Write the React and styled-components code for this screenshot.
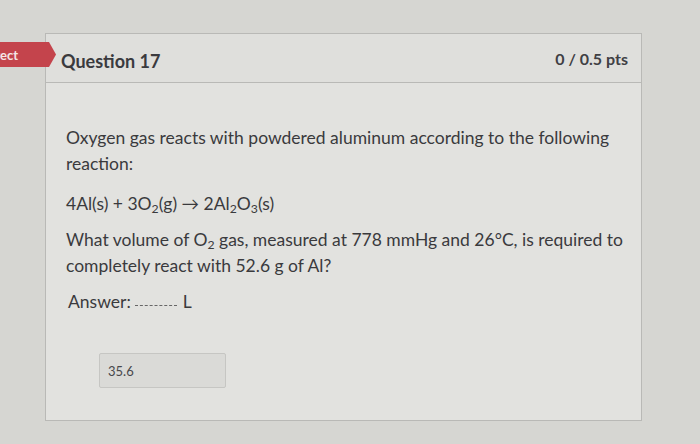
import React from "react";
import styled, { createGlobalStyle } from "styled-components";

const Global = createGlobalStyle`
  html, body { margin: 0; padding: 0; }
  body {
    background: #d6d6d2;
    font-family: Lato, "Noto Sans", sans-serif;
    color: #38383b;
    width: 700px;
    height: 444px;
    overflow: hidden;
  }
`;

const Page = styled.div`
  position: relative;
  width: 700px;
  height: 444px;
  padding: 33px 0 0 45px;
  box-sizing: border-box;
`;

const Card = styled.div`
  width: 597px;
  height: 388px;
  box-sizing: border-box;
  border: 1px solid #b9b9b6;
  background: #e2e2df;
  display: flex;
  flex-direction: column;
`;

const Header = styled.div`
  height: 49px;
  box-sizing: border-box;
  border-bottom: 1px solid #b9b9b6;
  background: #dfdfdc;
  display: flex;
  align-items: center;
  justify-content: space-between;
  padding: 0 13px 0 15px;
`;

const Title = styled.div`
  font-size: 18px;
  font-weight: 700;
  color: #3a3a3e;
  padding-top: 5px;
`;

const Points = styled.div`
  font-size: 16px;
  font-weight: 700;
  color: #404044;
  padding-top: 1px;
`;

const Tag = styled.div`
  position: absolute;
  left: 0;
  top: 42px;
  width: 56px;
  height: 25px;
  background: #c4444c;
  clip-path: polygon(0 0, 49px 0, 56px 50%, 49px 100%, 0 100%);
  overflow: hidden;
  display: flex;
  align-items: center;
  justify-content: flex-end;
`;

const TagText = styled.span`
  color: #f4e6e6;
  font-size: 13px;
  font-weight: 700;
  white-space: nowrap;
  margin-right: 38px;
`;

const Body = styled.div`
  padding: 42px 4px 0 20px;
`;

const Para = styled.p`
  margin: 0 0 ${(p) => p.$gap || 10}px 0;
  font-size: 17.5px;
  line-height: 26px;
  color: #3a3a3d;
`;

const Eq = styled(Para)`
  font-size: 17.5px;
  padding-top: 4px;
`;

const Sub = styled.sub`
  font-size: 0.7em;
  vertical-align: -0.25em;
  line-height: 0;
`;

const AnswerLine = styled(Para)`
  padding-left: 2px;
  margin-top: 8px;
`;

const Blank = styled.span`
  display: inline-block;
  width: 42px;
  margin: 0 6px 0 4px;
  border-bottom: 1px dashed #666;
  vertical-align: 2px;
`;

const InputBox = styled.div`
  margin: 38px 0 0 33px;
  width: 127px;
  height: 35px;
  box-sizing: border-box;
  border: 1px solid #c6c6c3;
  border-radius: 2px;
  background: #dadad7;
  display: flex;
  align-items: center;
  padding-left: 8px;
  font-size: 13px;
  color: #48484b;
`;

export default function App() {
  return (
    <>
      <Global />
      <Page>
        <Tag>
          <TagText>Incorrect</TagText>
        </Tag>
        <Card>
          <Header>
            <Title>Question 17</Title>
            <Points>0 / 0.5 pts</Points>
          </Header>
          <Body>
            <Para $gap={10}>
              Oxygen gas reacts with powdered aluminum according to the following
              reaction:
            </Para>
            <Eq $gap={10}>
              4Al(s) + 3O<Sub>2</Sub>(g) → 2Al<Sub>2</Sub>O<Sub>3</Sub>(s)
            </Eq>
            <Para $gap={0}>
              What volume of O<Sub>2</Sub> gas, measured at 778 mmHg and 26°C, is
              required to completely react with 52.6 g of Al?
            </Para>
            <AnswerLine $gap={0}>
              Answer:<Blank />L
            </AnswerLine>
            <InputBox>35.6</InputBox>
          </Body>
        </Card>
      </Page>
    </>
  );
}
